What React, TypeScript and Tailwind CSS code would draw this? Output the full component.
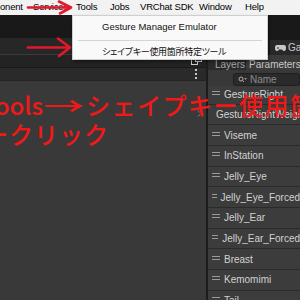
import type { ReactNode } from "react";

const MENU: { label: string; w: string }[] = [
	{ label: "onent", w: "w-[33px]" },
	{ label: "Services", w: "w-[43px]" },
	{ label: "Tools", w: "w-[34px]" },
	{ label: "Jobs", w: "w-[30px]" },
	{ label: "VRChat SDK", w: "w-[59px]" },
	{ label: "Window", w: "w-[46px]" },
	{ label: "Help", w: "w-[40px]" },
];

const PARAMS = [
	"GestureRight",
	"GestureRightWeight",
	"Viseme",
	"InStation",
	"Jelly_Eye",
	"Jelly_Eye_Forced",
	"Jelly_Ear",
	"Jelly_Ear_Forced",
	"Breast",
	"Kemomimi",
	"Tail",
];

function Row({ first, children }: { first?: boolean; children: ReactNode }) {
	return (
		<div
			className={`flex items-center shrink-0 bg-[#3c3c3c] border-b border-[#2b2b2b] ${first ? "h-[18.67px]" : "h-[20.67px]"}`}
		>
			<div className="ml-[4px] w-[8px] flex flex-col gap-[2px] -mt-[3px]">
				<div className="h-px bg-[#9a9a9a]" />
				<div className="h-px bg-[#9a9a9a]" />
			</div>
			<span className="ml-[4px] whitespace-nowrap text-[10px] text-[#d2d2d2]">
				{children}
			</span>
		</div>
	);
}

export default function App() {
	return (
		<div className="relative w-[300px] h-[300px] overflow-hidden bg-[#393939] font-['Liberation_Sans',sans-serif]">
			{/* menu bar */}
			<div className="h-[15px] bg-[#f2f2f2] flex items-center text-[9.5px] tracking-[-0.2px] text-black">
				{MENU.map((m) => (
					<span key={m.label} className={`${m.w} shrink-0 whitespace-nowrap`}>
						{m.label}
					</span>
				))}
			</div>
			{/* toolbar */}
			<div className="h-[23px] bg-[#191919]" />

			<div className="flex h-[262px]">
				{/* left panel */}
				<div className="w-[206px] flex flex-col">
					<div className="h-[17px] bg-[#272727] border-b border-[#3a3a3a] shrink-0" />
					<div className="h-[13px] bg-[#232323] border-b border-[#191919] shrink-0 flex justify-end items-start pr-[4px] pt-[2px]">
						<svg width="11" height="8" viewBox="0 0 11 8" fill="none" stroke="#cfcfcf" strokeWidth="1">
							<rect x="0.5" y="2.5" width="6" height="5" />
							<rect x="4.5" y="0.5" width="6" height="4" fill="#232323" />
						</svg>
					</div>
					<div className="h-[13px] bg-[#2a2a2a] border-b border-[#232323] shrink-0 flex justify-end items-center pr-[9px]">
						<div className="flex flex-col gap-[2px]">
							<div className="w-[2px] h-[2px] bg-[#c8c8c8]" />
							<div className="w-[2px] h-[2px] bg-[#c8c8c8]" />
							<div className="w-[2px] h-[2px] bg-[#c8c8c8]" />
						</div>
					</div>
					<div className="flex-1 bg-[#393939] flex justify-end pr-[4px] pt-[29px]">
						<svg width="5" height="7" viewBox="0 0 5 7" fill="none" stroke="#8a8a8a" strokeWidth="1">
							<path d="M1 0.5 L4 3.5 L1 6.5" />
						</svg>
					</div>
				</div>
				<div className="w-[2px] bg-[#1c1c1c]" />

				{/* right panel */}
				<div className="flex-1 flex flex-col bg-[#353535] overflow-hidden">
					<div className="h-[17px] bg-[#191919] shrink-0 flex items-end">
						<div className="ml-[62px] h-[15px] bg-[#282828] flex items-center pl-[5px] gap-[2px] text-[10px] text-[#c8c8c8]">
							<svg width="11" height="6" viewBox="0 0 11 6">
								<path d="M2 0 H9 Q11 0 11 3 Q11 6 9 6 Q8 6 7 4.5 H4 Q3 6 2 6 Q0 6 0 3 Q0 0 2 0Z" fill="#c8c8c8" />
								<rect x="2" y="2.5" width="2" height="1" fill="#282828" />
							</svg>
							<span>Game</span>
						</div>
					</div>
					<div className="h-[15px] shrink-0 flex text-[10px]">
						<div className="w-[40px] bg-[#2a2a2a] text-[#a8a8a8] flex items-center pl-[7px] pt-[3px] border-r border-[#222]">
							Layers
						</div>
						<div className="flex-1 bg-[#3a3a3a] text-[#c8c8c8] flex items-center pl-[3px] pt-[3px] whitespace-nowrap">
							Parameters
						</div>
					</div>
					<div className="h-[16px] shrink-0 bg-[#383838] pt-[3px] pl-[25px]">
						<div className="h-[13px] rounded-[3px] bg-[#2a2a2a] border border-[#1f1f1f] flex items-center pl-[4px] gap-[3px]">
							<svg width="9" height="7" viewBox="0 0 9 7" fill="none" stroke="#b0b0b0" strokeWidth="1">
								<circle cx="3" cy="3" r="2" />
								<path d="M4.5 4.5 L6 6" />
								<path d="M6.5 2.5 L8.5 2.5 L7.5 3.5Z" fill="#b0b0b0" strokeWidth="0.5" />
							</svg>
							<span className="text-[10px] text-[#8a8a8a]">Name</span>
						</div>
					</div>
					{PARAMS.map((p, i) => (
						<Row key={p} first={i === 0}>
							{p}
						</Row>
					))}
				</div>
			</div>

			{/* Tools dropdown */}
			<div className="absolute left-[72px] top-[15px] w-[196px] h-[45px] bg-[#f9f9f9] border border-[#cfcfcf] shadow-[1px_2px_3px_rgba(0,0,0,0.35)] flex flex-col">
				<div className="h-[22px] flex items-center pl-[29px] text-[9.5px] text-[#111] whitespace-nowrap">
					Gesture Manager Emulator
				</div>
				<div className="h-[4px] flex items-center px-[5px]">
					<div className="h-px flex-1 bg-[#d4d4d4]" />
				</div>
				<div className="h-[17px] flex items-center pl-[29px] pt-[2px] text-[9px] tracking-[-0.3px] text-[#111] whitespace-nowrap font-['Noto_Sans_CJK_JP',sans-serif] [font-feature-settings:'palt']">
					シェイプキー使用箇所特定ツール
				</div>
			</div>

			{/* red annotation text */}
			<div className="absolute left-0 top-[90px] text-[24px] leading-[29px] font-medium text-[#f21818] whitespace-nowrap font-['Noto_Sans_CJK_JP',sans-serif]">
				<div className="-ml-[18px]">
					Tools
					<span className="inline-block w-[43px] text-center">
						<span className="inline-block scale-x-[1.7]">→</span>
					</span>
					<span className="tracking-[1.5px]">シェイプキー使用箇所特定ツール</span>
				</div>
				<div className="-ml-[16px] tracking-[1px]">ークリック</div>
			</div>

			{/* red arrows */}
			<svg
				className="absolute left-0 top-0 pointer-events-none"
				width="300"
				height="300"
				viewBox="0 0 300 300"
				fill="none"
				stroke="#e3182a"
				strokeWidth="2.6"
				strokeLinecap="round"
				strokeLinejoin="round"
			>
				<path d="M28 7.5 H70" />
				<path d="M59 1.5 L71 7.5 L60 13.5" />
				<path d="M28 47.5 H69" />
				<path d="M58 38.5 L70 47.5 L59 56" />
			</svg>
		</div>
	);
}
